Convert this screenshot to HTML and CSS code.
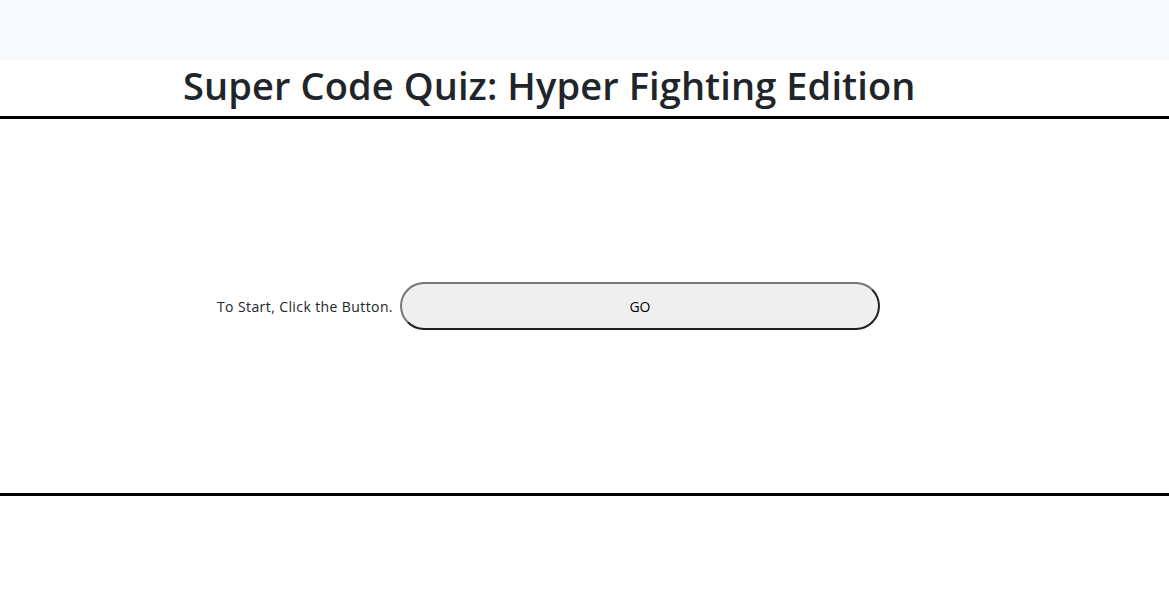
FILE: index.html
```html
<!DOCTYPE html>
<html>

<head>
    <title>Super Code Quiz</title>
    <meta name="viewport" content="width=device-width, initial-scale=1.0">
    <link rel="stylesheet" href="styles.css">
</head>

<body>
    <div class="top-bar"></div>
    <header class="title-row">
        <h1>Super Code Quiz: Hyper Fighting Edition</h1>
    </header>
    <main class="quiz-area">
        <div class="start-row">
            <span class="start-text">To Start, Click the Button.</span>
            <button class="go-btn">GO</button>
        </div>
    </main>
</body>

</html>
```

FILE: styles.css
```css
* {
    box-sizing: border-box;
    padding: 0;
    margin: 0;
}

body {
    font-family: "Open Sans", "Noto Sans", sans-serif;
    color: #212529;
    background-color: #fff;
}

.top-bar {
    height: 60px;
    background-color: #f8f9fa;
}

.title-row {
    height: 56px;
    padding-left: 183px;
    padding-bottom: 4px;
    display: flex;
    align-items: center;
}

h1 {
    font-size: 38px;
    font-weight: 600;
    line-height: 1.2;
    letter-spacing: 0.1px;
}

.quiz-area {
    height: 380px;
    border-top: 3px solid #000;
    border-bottom: 3px solid #000;
    display: flex;
    align-items: center;
}

.start-row {
    display: flex;
    align-items: center;
    padding-left: 217px;
}

.start-text {
    font-size: 14px;
    letter-spacing: 0.4px;
    margin-right: 7px;
}

.go-btn {
    width: 480px;
    height: 48px;
    border: 2px outset #767676;
    border-radius: 24px;
    background-color: #efefef;
    font-family: "Open Sans", "Noto Sans", sans-serif;
    font-size: 14px;
    color: #000;
}
```
